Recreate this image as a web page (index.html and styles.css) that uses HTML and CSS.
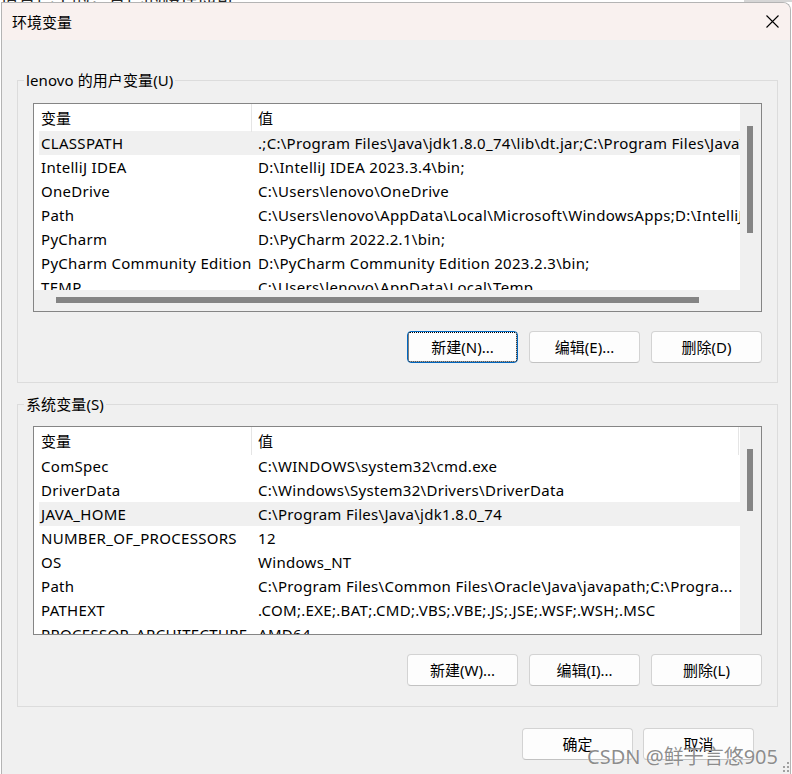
FILE: index.html
```html
<!DOCTYPE html>
<html lang="zh-CN">
<head>
<meta charset="utf-8">
<title>环境变量</title>
<link rel="stylesheet" href="styles.css">
</head>
<body>
<div class="backdrop">
  <span class="bg-text">请且已干的；且已的路径即可</span>
  <span class="bg-block"></span>
</div>
<div class="window">
  <div class="titlebar">
    <span class="title">环境变量</span>
    <svg class="close" width="13" height="13" viewBox="0 0 13 13"><path d="M0.5 0.5 L12.5 12.5 M12.5 0.5 L0.5 12.5" stroke="#000" stroke-width="1.1" fill="none"/></svg>
  </div>
  <div class="content">
    <fieldset class="group g-user">
      <legend>lenovo 的用户变量(U)</legend>
      <div class="gbody gbody-user">
        <div class="list list-user">
          <div class="viewport">
            <div class="lhead lhead-user"><div class="hcell hname">变量</div><div class="hcell hval">值</div></div>
            <div class="row sel"><span class="name">CLASSPATH</span><span class="val">.;C:\Program Files\Java\jdk1.8.0_74\lib\dt.jar;C:\Program Files\Java\jdk1.8.0_74\lib\tools.jar</span></div>
            <div class="row"><span class="name">IntelliJ IDEA</span><span class="val">D:\IntelliJ IDEA 2023.3.4\bin;</span></div>
            <div class="row"><span class="name">OneDrive</span><span class="val">C:\Users\lenovo\OneDrive</span></div>
            <div class="row"><span class="name">Path</span><span class="val">C:\Users\lenovo\AppData\Local\Microsoft\WindowsApps;D:\IntelliJ IDEA 2023.3.4\bin;</span></div>
            <div class="row"><span class="name">PyCharm</span><span class="val">D:\PyCharm 2022.2.1\bin;</span></div>
            <div class="row"><span class="name">PyCharm Community Edition</span><span class="val">D:\PyCharm Community Edition 2023.2.3\bin;</span></div>
            <div class="row"><span class="name">TEMP</span><span class="val">C:\Users\lenovo\AppData\Local\Temp</span></div>
            <div class="row"><span class="name">TMP</span><span class="val">C:\Users\lenovo\AppData\Local\Temp</span></div>
          </div>
          <div class="vscroll"><div class="vthumb vthumb-user"></div></div>
          <div class="hscroll"><div class="hthumb"></div></div>
          <div class="corner"></div>
        </div>
        <div class="btnrow">
          <button class="btn focus">新建(N)...</button>
          <button class="btn">编辑(E)...</button>
          <button class="btn">删除(D)</button>
        </div>
      </div>
    </fieldset>

    <fieldset class="group g-sys">
      <legend>系统变量(S)</legend>
      <div class="gbody gbody-sys">
        <div class="list list-sys">
          <div class="viewport">
            <div class="lhead lhead-sys"><div class="hcell hname">变量</div><div class="hcell hval">值</div></div>
            <div class="row"><span class="name">ComSpec</span><span class="val">C:\WINDOWS\system32\cmd.exe</span></div>
            <div class="row"><span class="name">DriverData</span><span class="val">C:\Windows\System32\Drivers\DriverData</span></div>
            <div class="row sel"><span class="name">JAVA_HOME</span><span class="val">C:\Program Files\Java\jdk1.8.0_74</span></div>
            <div class="row"><span class="name">NUMBER_OF_PROCESSORS</span><span class="val">12</span></div>
            <div class="row"><span class="name">OS</span><span class="val">Windows_NT</span></div>
            <div class="row"><span class="name">Path</span><span class="val">C:\Program Files\Common Files\Oracle\Java\javapath;C:\Progra...</span></div>
            <div class="row"><span class="name">PATHEXT</span><span class="val">.COM;.EXE;.BAT;.CMD;.VBS;.VBE;.JS;.JSE;.WSF;.WSH;.MSC</span></div>
            <div class="row"><span class="name">PROCESSOR_ARCHITECTURE</span><span class="val">AMD64</span></div>
          </div>
          <div class="vscroll"><div class="vthumb vthumb-sys"></div></div>
        </div>
        <div class="btnrow">
          <button class="btn">新建(W)...</button>
          <button class="btn">编辑(I)...</button>
          <button class="btn">删除(L)</button>
        </div>
      </div>
    </fieldset>

    <div class="dlg-btns">
      <button class="btn">确定</button>
      <button class="btn">取消</button>
    </div>
  </div>
  <div class="watermark">CSDN @鲜于言悠905</div>
  <svg class="grip" width="8" height="10" viewBox="0 0 8 10"><rect x="6" y="0" width="2" height="2" fill="#a0a0a0"/><rect x="6" y="4" width="2" height="2" fill="#a0a0a0"/><rect x="2" y="4" width="2" height="2" fill="#a0a0a0"/><rect x="6" y="8" width="2" height="2" fill="#a0a0a0"/><rect x="2" y="8" width="2" height="2" fill="#a0a0a0"/></svg>
</div>
</body>
</html>
```
FILE: styles.css
```css
html, body {
  margin: 0;
  height: 100%;
}
body {
  background: #ffffff;
  font-family: "Noto Sans", "Noto Sans CJK SC", sans-serif;
  font-size: 15px;
  color: #000;
  overflow: hidden;
}
.backdrop {
  height: 2px;
  display: flex;
  align-items: flex-end;
  overflow: hidden;
}
.bg-text {
  font-family: "Noto Sans CJK SC", sans-serif;
  font-size: 18px;
  line-height: 20px;
  margin-bottom: -5px;
  color: #222;
  white-space: nowrap;
}
.bg-block {
  margin-left: auto;
  width: 48px;
  height: 2px;
  background: #d6d6d6;
}
.window {
  margin: 0 1px;
  height: 772px;
  box-sizing: border-box;
  border: 1px solid #b4b4b4;
  border-bottom: none;
  border-top-right-radius: 8px;
  background: #f0f0f0;
  display: flex;
  flex-direction: column;
  position: relative;
  overflow: hidden;
}
.titlebar {
  height: 37px;
  flex: none;
  background: #f9f1ef;
  display: flex;
  align-items: center;
  padding: 0 11px 0 10px;
}
.title {
  flex: 1;
  font-family: "Noto Sans CJK SC", sans-serif;
  font-size: 15px;
}
.close {
  display: block;
}
.content {
  padding: 0 12px 0 15px;
  display: flex;
  flex-direction: column;
}
.group {
  margin: 0;
  padding: 0;
  border: 1px solid #dcdcdc;
  min-width: 0;
}
.g-user {
  margin-top: 30px;
}
.g-sys {
  margin-top: 11px;
}
.group legend {
  margin-left: 6px;
  padding: 0 2px;
  line-height: 20px;
  font-size: 15px;
  letter-spacing: 0.1px;
}
.gbody {
  padding: 0 15px;
}
.gbody-user {
  padding-top: 13px;
  padding-bottom: 19px;
}
.gbody-sys {
  padding-top: 12px;
  padding-bottom: 20px;
}
.list {
  height: 209px;
  box-sizing: border-box;
  border: 1px solid #858585;
  background: #fff;
  display: grid;
  grid-template-columns: 1fr 21px;
}
.list-user {
  grid-template-rows: 1fr 21px;
}
.list-sys {
  grid-template-rows: 1fr;
}
.viewport {
  overflow: hidden;
  min-width: 0;
}
.lhead {
  display: grid;
  height: 27px;
  line-height: 28px;
}
.lhead-user {
  grid-template-columns: 218px 1fr;
}
.lhead-sys {
  grid-template-columns: 218px 487px;
}
.hcell {
  box-sizing: border-box;
  white-space: nowrap;
}
.hname {
  padding-left: 7px;
  border-right: 1px solid #e5e5e5;
}
.hval {
  padding-left: 6px;
}
.lhead-sys .hval {
  border-right: 1px solid #e5e5e5;
}
.row {
  margin-left: 5px;
  display: grid;
  grid-template-columns: 217px 1fr;
  height: 24px;
  line-height: 24px;
  white-space: nowrap;
  letter-spacing: 0.3px;
}
.row.sel {
  background: #f0f0f0;
}
.name {
  padding-left: 2px;
  overflow: hidden;
  text-overflow: ellipsis;
}
.val {
  padding-left: 2px;
}
.vscroll {
  background: #f0f0f0;
  padding-top: 22px;
  padding-left: 7px;
  box-sizing: border-box;
}
.vthumb {
  width: 6px;
  background: #858585;
}
.vthumb-user {
  height: 107px;
}
.vthumb-sys {
  height: 62px;
}
.hscroll {
  background: #f0f0f0;
  padding: 7px 0 0 22px;
  box-sizing: border-box;
}
.hthumb {
  width: 643px;
  height: 6px;
  background: #858585;
}
.corner {
  background: #f0f0f0;
}
.btnrow {
  margin-top: 19px;
  display: flex;
  justify-content: flex-end;
  gap: 11px;
}
.btn {
  width: 111px;
  height: 32px;
  box-sizing: border-box;
  border: 1px solid #d3d3d3;
  border-bottom-color: #c2c2c2;
  border-radius: 4px;
  background: #fdfdfd;
  font-family: "Noto Sans", "Noto Sans CJK SC", sans-serif;
  font-size: 15px;
  color: #000;
  padding: 0 0 2px;
  position: relative;
}
.btn.focus {
  border-color: #0067c0;
}
.btn.focus::after {
  content: "";
  position: absolute;
  inset: 0;
  border: 1px dotted #000;
  border-radius: 2px;
}
.dlg-btns {
  margin-top: 21px;
  margin-right: 24px;
  display: flex;
  justify-content: flex-end;
  gap: 10px;
}
.watermark {
  position: absolute;
  right: 12px;
  bottom: 6px;
  font-family: "Noto Sans", "Noto Sans CJK SC", sans-serif;
  font-size: 20px;
  line-height: 22px;
  color: rgba(120, 120, 120, 0.85);
  text-shadow: 0 0 1px #fff;
  white-space: nowrap;
}
.grip {
  position: absolute;
  right: 1px;
  bottom: 2px;
}
```
